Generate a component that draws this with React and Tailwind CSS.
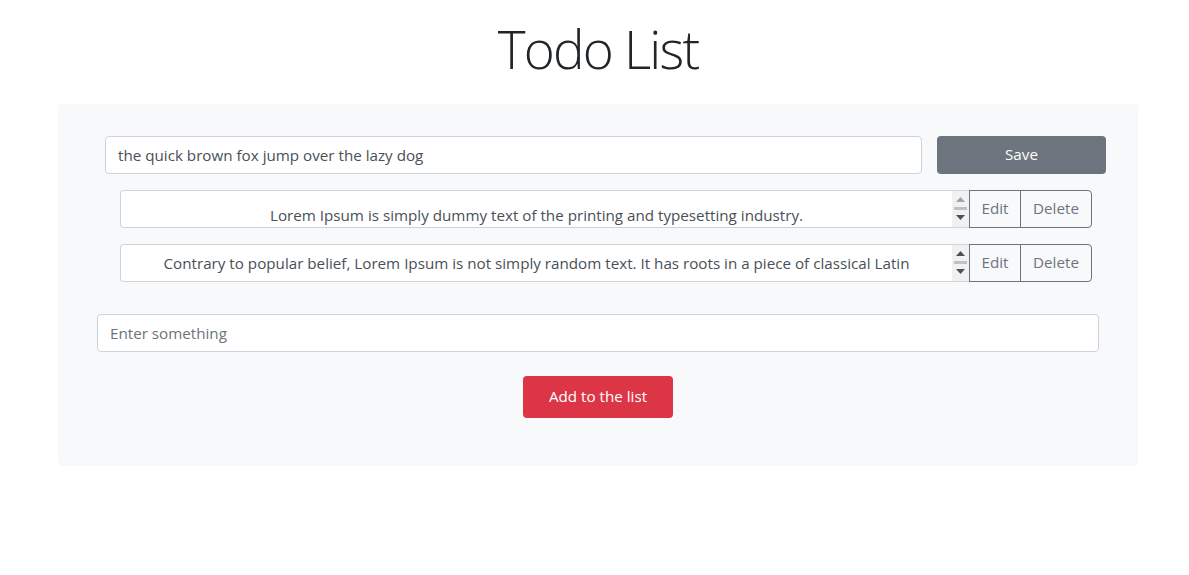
import { useState } from 'react';

const font = { fontFamily: '"Open Sans", "Noto Sans", sans-serif' };

const Arrow = ({ up, color }) => (
  <svg width="9" height="5" viewBox="0 0 9 5" fill={color}>
    {up ? <path d="M0 5 L4.5 0 L9 5 Z" /> : <path d="M0 0 L9 0 L4.5 5 Z" />}
  </svg>
);

const ScrollStub = ({ top }) => (
  <div className="flex w-[17px] shrink-0 flex-col items-center justify-between bg-[#f1f1f1] pt-[6px] pb-[7px]">
    <Arrow up color={top ? '#a3a3a3' : '#505050'} />
    <span className="h-[3px] w-[13px] bg-[#c1c1c1]" />
    <Arrow color="#505050" />
  </div>
);

const TodoItem = ({ text, top, offset }) => (
  <div className="flex h-[38px]">
    <div className="flex flex-1 overflow-hidden rounded-l-[4px] border border-r-0 border-[#ced4da] bg-white">
      <div className={`flex-1 overflow-hidden whitespace-nowrap text-center text-[15.2px] text-[#495057] ${offset}`}>
        {text}
      </div>
      <ScrollStub top={top} />
    </div>
    <button className="w-[52px] border border-[#6c757d] text-[15.2px] text-[#6c757d]">Edit</button>
    <button className="-ml-px w-[72px] rounded-r-[4px] border border-[#6c757d] text-[15.2px] text-[#6c757d]">Delete</button>
  </div>
);

export default function App() {
  const [draft, setDraft] = useState('the quick brown fox jump over the lazy dog');
  const [entry, setEntry] = useState('');

  return (
    <div className="min-h-screen bg-white pl-[7px]" style={font}>
      <h1 className="mt-[17px] mb-[23px] text-center text-[53px] font-light leading-[1.2] tracking-[-1.8px] text-[#212529]">Todo List</h1>

      <div className="mx-auto w-[1080px] rounded-[4px] bg-[#f8f9fa] pt-8 pb-12">
        {/* edit row */}
        <div className="ml-[47px] mr-8 flex gap-[15px]">
          <input
            value={draft}
            onChange={(e) => setDraft(e.target.value)}
            className="h-[38px] flex-1 rounded-[4px] border border-[#ced4da] bg-white px-3 text-[15.2px] text-[#495057] outline-none"
          />
          <button className="h-[38px] w-[169px] rounded-[4px] bg-[#6c757d] text-[15.2px] text-white">Save</button>
        </div>

        {/* items */}
        <div className="mt-4 ml-[62px] mr-[46px] flex flex-col gap-4">
          <TodoItem
            top
            offset="pt-[13px]"
            text="Lorem Ipsum is simply dummy text of the printing and typesetting industry."
          />
          <TodoItem
            offset="pt-[7px]"
            text="Contrary to popular belief, Lorem Ipsum is not simply random text. It has roots in a piece of classical Latin"
          />
        </div>

        {/* new entry */}
        <div className="mt-8 mx-[39px]">
          <input
            value={entry}
            onChange={(e) => setEntry(e.target.value)}
            placeholder="Enter something"
            className="h-[38px] w-full rounded-[4px] border border-[#ced4da] bg-white px-3 text-[15.2px] text-[#495057] outline-none placeholder:text-[#6c757d]"
          />
        </div>

        <div className="mt-6 flex justify-center">
          <button className="h-[42px] w-[150px] rounded-[4px] bg-[#dc3545] text-[15.2px] text-white">Add to the list</button>
        </div>
      </div>
    </div>
  );
}
